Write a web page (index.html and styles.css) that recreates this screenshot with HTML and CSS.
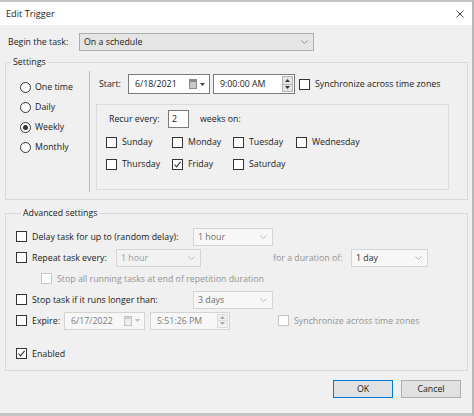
FILE: index.html
```html
<!DOCTYPE html>
<html lang="en">
<head>
  <meta charset="UTF-8" />
  <title>Edit Trigger</title>
  <link rel="stylesheet" href="styles.css">
</head>
<body>
  <div class="window">
    <div class="titlebar">
      <span>Edit Trigger</span>
      <svg class="close" width="8" height="8" viewBox="0 0 8 8"><path d="M0.5 0.5L7.5 7.5M7.5 0.5L0.5 7.5" stroke="#444" stroke-width="1" fill="none"/></svg>
    </div>

    <div class="client">
      <div class="begin-row">
        <span class="begin-label">Begin the task:</span>
        <div class="combo task-combo">
          <span>On a schedule</span>
          <svg class="chev" width="7" height="4" viewBox="0 0 7 4"><path d="M0.5 0.5L3.5 3.5L6.5 0.5" stroke="#8c8c8c" fill="none"/></svg>
        </div>
      </div>

      <fieldset class="group">
        <legend>Settings</legend>
        <div class="settings-body">
          <div class="radios">
            <label class="radio"><span class="rb"></span>One time</label>
            <label class="radio"><span class="rb"></span>Daily</label>
            <label class="radio"><span class="rb on"></span>Weekly</label>
            <label class="radio"><span class="rb"></span>Monthly</label>
          </div>
          <div class="divider"></div>
          <div class="schedule">
            <div class="start-row">
              <span class="start-label">Start:</span>
              <div class="field date-field">
                <span>6/18/2021</span>
                <span class="cal">
                  <svg width="9" height="10" viewBox="0 0 9 10"><rect x="0.5" y="0.5" width="7" height="9" fill="#c9c9c9" stroke="#8a8a8a"/><rect x="1" y="1" width="6" height="2" fill="#8a8a8a"/></svg>
                  <svg width="5" height="3" viewBox="0 0 5 3"><path d="M0 0H5L2.5 3Z" fill="#444"/></svg>
                </span>
              </div>
              <div class="field time-field">
                <span>9:00:00 AM</span>
                <span class="spin">
                  <span class="spin-btn"><svg width="5" height="3" viewBox="0 0 5 3"><path d="M0 3H5L2.5 0Z" fill="#333"/></svg></span>
                  <span class="spin-btn"><svg width="5" height="3" viewBox="0 0 5 3"><path d="M0 0H5L2.5 3Z" fill="#333"/></svg></span>
                </span>
              </div>
              <label class="opt sync"><span class="cb"></span>Synchronize across time zones</label>
            </div>

            <div class="recur-box">
              <div class="recur-row">
                <span class="recur-label">Recur every:</span>
                <span class="num-input">2</span>
                <span class="weeks">weeks on:</span>
              </div>
              <div class="days">
                <label class="opt"><span class="cb"></span>Sunday</label>
                <label class="opt"><span class="cb"></span>Monday</label>
                <label class="opt"><span class="cb"></span>Tuesday</label>
                <label class="opt"><span class="cb"></span>Wednesday</label>
                <label class="opt"><span class="cb"></span>Thursday</label>
                <label class="opt"><span class="cb on"><svg width="9" height="9" viewBox="0 0 9 9"><path d="M1.5 4.5L3.5 6.8L7.6 1.8" stroke="#333" stroke-width="1.1" fill="none"/></svg></span>Friday</label>
                <label class="opt"><span class="cb"></span>Saturday</label>
              </div>
            </div>
          </div>
        </div>
      </fieldset>

      <fieldset class="group advanced">
        <legend>Advanced settings</legend>
        <div class="adv-row">
          <label class="opt w-long"><span class="cb"></span>Delay task for up to (random delay):</label>
          <div class="combo dim w-80"><span>1 hour</span><svg class="chev" width="7" height="4" viewBox="0 0 7 4"><path d="M0.5 0.5L3.5 3.5L6.5 0.5" stroke="#b5b5b5" fill="none"/></svg></div>
        </div>
        <div class="adv-row">
          <label class="opt w-repeat"><span class="cb"></span>Repeat task every:</label>
          <div class="combo dim grey w-85"><span>1 hour</span><svg class="chev" width="7" height="4" viewBox="0 0 7 4"><path d="M0.5 0.5L3.5 3.5L6.5 0.5" stroke="#b5b5b5" fill="none"/></svg></div>
          <span class="muted dur-label">for a duration of:</span>
          <div class="combo dim w-77"><span class="dark">1 day</span><svg class="chev" width="7" height="4" viewBox="0 0 7 4"><path d="M0.5 0.5L3.5 3.5L6.5 0.5" stroke="#b5b5b5" fill="none"/></svg></div>
        </div>
        <div class="adv-row indent">
          <label class="opt muted"><span class="cb off"></span>Stop all running tasks at end of repetition duration</label>
        </div>
        <div class="adv-row">
          <label class="opt w-long"><span class="cb"></span>Stop task if it runs longer than:</label>
          <div class="combo dim w-80"><span>3 days</span><svg class="chev" width="7" height="4" viewBox="0 0 7 4"><path d="M0.5 0.5L3.5 3.5L6.5 0.5" stroke="#b5b5b5" fill="none"/></svg></div>
        </div>
        <div class="adv-row">
          <label class="opt w-expire"><span class="cb"></span>Expire:</label>
          <div class="field dim exp-date">
            <span>6/17/2022</span>
            <span class="cal">
              <svg width="9" height="10" viewBox="0 0 9 10"><rect x="0.5" y="0.5" width="7" height="9" fill="#ececec" stroke="#c4c4c4"/><rect x="1" y="1" width="6" height="2" fill="#cfcfcf"/></svg>
              <svg width="5" height="3" viewBox="0 0 5 3"><path d="M0 0H5L2.5 3Z" fill="#bbb"/></svg>
            </span>
          </div>
          <div class="field dim exp-time">
            <span>5:51:26 PM</span>
            <span class="spin">
              <span class="spin-btn"><svg width="5" height="3" viewBox="0 0 5 3"><path d="M0 3H5L2.5 0Z" fill="#aaa"/></svg></span>
              <span class="spin-btn"><svg width="5" height="3" viewBox="0 0 5 3"><path d="M0 0H5L2.5 3Z" fill="#aaa"/></svg></span>
            </span>
          </div>
          <label class="opt muted exp-sync"><span class="cb off"></span>Synchronize across time zones</label>
        </div>
        <div class="adv-row enabled">
          <label class="opt"><span class="cb on"><svg width="9" height="9" viewBox="0 0 9 9"><path d="M1.5 4.5L3.5 6.8L7.6 1.8" stroke="#333" stroke-width="1.1" fill="none"/></svg></span>Enabled</label>
        </div>
      </fieldset>

      <div class="buttons">
        <button class="btn default">OK</button>
        <button class="btn">Cancel</button>
      </div>
    </div>
  </div>
</body>
</html>
```

FILE: styles.css
```css
* {
  box-sizing: border-box;
}

body {
  margin: 0;
  background: #f0f0f0;
  font-family: "Open Sans", "Segoe UI", sans-serif;
  font-size: 8.8px;
  color: #1a1a1a;
}

.window {
  width: 474px;
  height: 416px;
  border-top: 2px solid #c2c2c2;
  border-right: 2px solid #b8b8b8;
  border-bottom: 3px solid #c4c4c4;
  display: flex;
  flex-direction: column;
  overflow: hidden;
}

.titlebar {
  height: 23px;
  flex-shrink: 0;
  background: #fff;
  display: flex;
  align-items: center;
  justify-content: space-between;
  padding: 0 8px 0 6px;
  font-size: 9.2px;
}

.client {
  flex: 1;
  padding: 0 4px 0 5px;
}

/* begin the task */
.begin-row {
  display: flex;
  align-items: center;
  margin-top: 8px;
  height: 18px;
}

.begin-label {
  width: 71px;
  margin-left: 3px;
}

.combo {
  height: 18px;
  display: flex;
  align-items: center;
  justify-content: space-between;
  padding: 0 5px 0 4px;
  border: 1px solid #adadad;
  background: #e5e5e5;
}

.task-combo {
  width: 235px;
}

.combo.dim {
  border-color: #d4d4d4;
  background: #f7f7f7;
  color: #6e6e6e;
}

.combo.grey {
  background: #f2f2f2;
  color: #9a9a9a;
}

.combo .dark {
  color: #333;
}

.w-80 { width: 80px; }
.w-85 { width: 85px; }
.w-77 { width: 77px; }

/* group boxes */
.group {
  margin: 4px 0 0;
  padding: 0;
  border: 1px solid #d9d9d9;
  min-width: 0;
}

.group legend {
  margin-left: 5px;
  padding: 0 2px;
  line-height: 14px;
}

.settings-body {
  height: 130px;
  display: flex;
}

.radios {
  width: 83px;
  padding: 8px 0 0 14px;
}

.radio {
  height: 20px;
  display: flex;
  align-items: center;
  gap: 4px;
}

.rb {
  width: 11px;
  height: 11px;
  border: 1px solid #333;
  border-radius: 50%;
  background: #fff;
  display: flex;
  align-items: center;
  justify-content: center;
}

.rb.on::after {
  content: "";
  width: 5px;
  height: 5px;
  border-radius: 50%;
  background: #333;
}

.divider {
  width: 1px;
  height: 121px;
  margin-top: 2px;
  background: #bcbcbc;
}

.schedule {
  flex: 1;
}

.start-row {
  display: flex;
  align-items: center;
  height: 20px;
  margin-top: 5px;
  padding-left: 9px;
}

.start-label {
  width: 29px;
}

.field {
  height: 20px;
  display: flex;
  align-items: center;
  justify-content: space-between;
  border: 1px solid #7a7a7a;
  background: #fff;
  padding-left: 6px;
}

.date-field {
  width: 82px;
  padding-right: 4px;
}

.time-field {
  width: 82px;
  margin-left: 3px;
  padding-left: 6px;
  padding-right: 1px;
}

.cal {
  display: flex;
  align-items: center;
  gap: 2px;
}

.spin {
  display: flex;
  flex-direction: column;
  width: 11px;
  height: 16px;
  border: 1px solid #b5b5b5;
  background: #e6e6e6;
}

.spin-btn {
  flex: 1;
  display: flex;
  align-items: center;
  justify-content: center;
}

.spin-btn + .spin-btn {
  border-top: 1px solid #b5b5b5;
}

/* checkbox */
.opt {
  display: flex;
  align-items: center;
  gap: 5px;
  white-space: nowrap;
}

.cb {
  width: 11px;
  height: 11px;
  flex-shrink: 0;
  border: 1px solid #333;
  background: #fff;
  display: flex;
  align-items: center;
  justify-content: center;
}

.cb.off {
  border-color: #c6c6c6;
}

.sync {
  margin-left: 4px;
}

/* weekly recurrence */
.recur-box {
  width: 353px;
  height: 86px;
  margin: 10px 0 0 6px;
  border: 1px solid #dadada;
  padding: 5px 0 0 12px;
}

.recur-row {
  display: flex;
  align-items: center;
  height: 18px;
}

.recur-label {
  width: 59px;
}

.num-input {
  width: 21px;
  height: 18px;
  border: 1px solid #7a7a7a;
  background: #fff;
  padding: 1px 0 0 3px;
  line-height: 14px;
}

.weeks {
  margin-left: 11px;
}

.days {
  display: grid;
  grid-template-columns: 66px 61px 63px auto;
  grid-auto-rows: 22px;
  align-items: center;
  margin: 3px 0 0 -3px;
}

/* advanced settings */
.advanced {
  margin-top: 6px;
  height: 165px;
  padding: 6px 0 0 10px;
}

.adv-row {
  display: flex;
  align-items: center;
  height: 21px;
}

.w-long { width: 177px; }
.w-repeat { width: 100px; }
.w-expire { width: 48px; }

.muted {
  color: #939393;
}

.dur-label {
  margin-left: 72px;
  width: 78px;
}

.indent {
  padding-left: 25px;
}

.field.dim {
  height: 18px;
  border-color: #d4d4d4;
  background: #f7f7f7;
  color: #7a7a7a;
}

.exp-date {
  width: 81px;
  padding-right: 4px;
}

.exp-time {
  width: 80px;
  margin-left: 5px;
  padding-right: 1px;
}

.exp-time .spin {
  height: 14px;
  border-color: #dcdcdc;
  background: #f0f0f0;
}

.exp-time .spin-btn + .spin-btn {
  border-top-color: #dcdcdc;
}

.exp-sync {
  margin-left: 48px;
}

.enabled {
  margin-top: 12px;
}

/* dialog buttons */
.buttons {
  display: flex;
  justify-content: flex-end;
  gap: 8px;
  margin: 9px 7px 0 0;
}

.btn {
  width: 60px;
  height: 18px;
  padding: 0;
  border: 1px solid #adadad;
  background: #e1e1e1;
  font: inherit;
  color: #1a1a1a;
}

.btn.default {
  border-color: #0078d7;
}
```
